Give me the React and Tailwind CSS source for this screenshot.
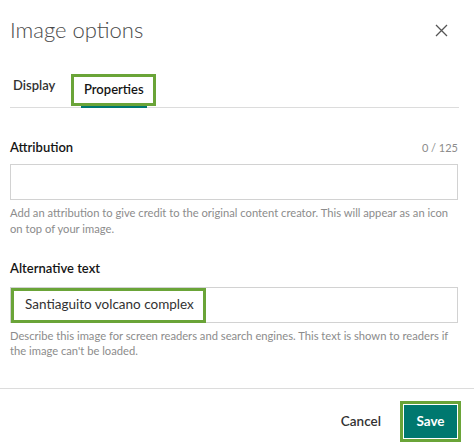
import React from 'react';

const font = { fontFamily: '"Lato", "Noto Sans", sans-serif' };

const App = () => {
  return (
    <div className="w-[474px] h-[447px] bg-white text-[#323232] overflow-hidden flex flex-col" style={font}>
      {/* header */}
      <div className="flex items-center justify-between pl-[10px] pr-[26px] pt-[14px] h-[46px]">
        <h1 className="text-[22px] font-light text-[#4a4a4a] leading-none">Image options</h1>
        <svg width="13" height="13" viewBox="0 0 13 13" className="text-[#555]">
          <path d="M1 1 L12 12 M12 1 L1 12" stroke="currentColor" strokeWidth="1.3" />
        </svg>
      </div>

      {/* tabs */}
      <div className="mx-[10px] mr-[15px] mt-[24px] border-b border-[#dcdcdc] flex items-end h-[38px]">
        <div className="text-[13px] font-semibold text-[#323232] pl-[3px] pr-[16px] pb-[12px]">Display</div>
        <div className="relative flex flex-col items-center">
          <div className="border-[3px] border-[#6aa438] w-[85px] h-[32px] flex items-center justify-center text-[13px] font-semibold text-[#151515] -mb-[6px]">
            Properties
          </div>
          <div className="mt-[5px] w-[66px] h-[2px] bg-[#00786f] translate-y-[1px]" />
        </div>
      </div>

      {/* attribution */}
      <div className="mx-[10px] mr-[16px] mt-[30px]">
        <div className="flex justify-between items-center">
          <span className="text-[13px] font-semibold text-[#151515]">Attribution</span>
          <span className="text-[11px] text-[#8c8c8c]">0 / 125</span>
        </div>
        <div className="mt-[6px] h-[36px] border border-[#d2d2d2]" />
        <p className="mt-[5px] text-[11.2px] leading-[16px] text-[#8c8c8c]">
          Add an attribution to give credit to the original content creator. This will appear as an icon on top of your image.
        </p>
      </div>

      {/* alt text */}
      <div className="mx-[10px] mr-[16px] mt-[18px]">
        <span className="text-[13px] font-semibold text-[#151515]">Alternative text</span>
        <div className="mt-[8px] h-[36px] border border-[#d2d2d2] relative flex items-center">
          <div className="absolute left-0 top-0 w-[195px] h-[35px] border-[3px] border-[#6aa438]" />
          <span className="pl-[14px] text-[13.5px] text-[#323232]">Santiaguito volcano complex</span>
        </div>
        <p className="mt-[5px] text-[11.2px] leading-[15px] text-[#8c8c8c]">
          Describe this image for screen readers and search engines. This text is shown to readers if the image can't be loaded.
        </p>
      </div>

      {/* footer */}
      <div className="mt-auto border-t border-[#dcdcdc] h-[59px] flex items-center justify-end pr-[13px] pt-[6px]">
        <button className="text-[13.5px] font-semibold text-[#323232] mr-[19px]">Cancel</button>
        <div className="border-[3px] border-[#6aa438] p-[1px]">
          <button className="bg-[#00786f] text-white text-[13.5px] font-bold w-[53px] h-[33px]">Save</button>
        </div>
      </div>
    </div>
  );
};

export default App;
